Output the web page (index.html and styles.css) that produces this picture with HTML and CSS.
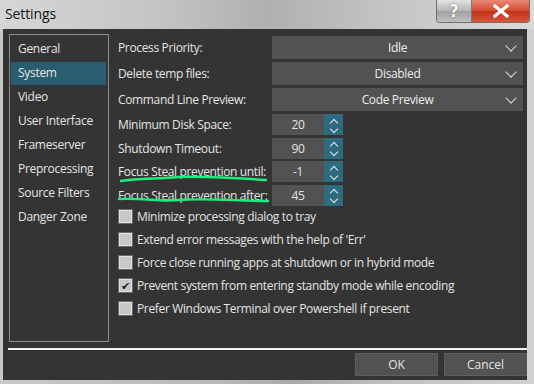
FILE: index.html
```html
<!DOCTYPE html>
<html lang="en">
<head>
    <meta charset="UTF-8">
    <title>Settings</title>
    <link rel="stylesheet" href="styles.css">
</head>
<body>
    <div class="window">
        <!-- title bar -->
        <div class="titlebar">
            <span class="title">Settings</span>
            <div class="caption-buttons">
                <div class="cap-btn help">?</div>
                <div class="cap-btn close">
                    <svg width="18" height="14" viewBox="0 0 18 14">
                        <path d="M3 2 L15 12 M15 2 L3 12" stroke="#fff" stroke-width="3.2" stroke-linecap="square"/>
                    </svg>
                </div>
            </div>
        </div>

        <div class="client">
            <div class="main">
                <!-- category list -->
                <ul class="sidebar">
                    <li>General</li>
                    <li class="active">System</li>
                    <li>Video</li>
                    <li>User Interface</li>
                    <li>Frameserver</li>
                    <li>Preprocessing</li>
                    <li>Source Filters</li>
                    <li>Danger Zone</li>
                </ul>

                <div class="panel">
                    <div class="row combo-row">
                        <span class="label">Process Priority:</span>
                        <div class="combo"><span>Idle</span><i class="chev"></i></div>
                    </div>
                    <div class="row combo-row">
                        <span class="label">Delete temp files:</span>
                        <div class="combo"><span>Disabled</span><i class="chev"></i></div>
                    </div>
                    <div class="row combo-row">
                        <span class="label">Command Line Preview:</span>
                        <div class="combo"><span>Code Preview</span><i class="chev"></i></div>
                    </div>

                    <div class="row spin-row">
                        <span class="label">Minimum Disk Space:</span>
                        <div class="spin"><span class="value">20</span><span class="arrows"><i class="up"></i><i class="down"></i></span></div>
                    </div>
                    <div class="row spin-row">
                        <span class="label">Shutdown Timeout:</span>
                        <div class="spin"><span class="value">90</span><span class="arrows"><i class="up"></i><i class="down"></i></span></div>
                    </div>
                    <div class="row spin-row">
                        <span class="label">Focus Steal prevention until:</span>
                        <div class="spin"><span class="value">-1</span><span class="arrows"><i class="up"></i><i class="down"></i></span></div>
                    </div>
                    <div class="row spin-row">
                        <span class="label">Focus Steal prevention after:</span>
                        <div class="spin"><span class="value">45</span><span class="arrows"><i class="up"></i><i class="down"></i></span></div>
                    </div>

                    <div class="checks">
                        <label class="check"><span class="box"></span>Minimize processing dialog to tray</label>
                        <label class="check"><span class="box"></span>Extend error messages with the help of 'Err'</label>
                        <label class="check"><span class="box"></span>Force close running apps at shutdown or in hybrid mode</label>
                        <label class="check"><span class="box checked">&#10004;</span>Prevent system from entering standby mode while encoding</label>
                        <label class="check"><span class="box"></span>Prefer Windows Terminal over Powershell if present</label>
                    </div>

                    <!-- hand drawn green marks -->
                    <svg class="marks" width="160" height="40" viewBox="0 0 160 40">
                        <path d="M3 9 C 20 6, 40 7, 60 5 C 90 4, 120 6, 148 8" stroke="#19f07c" stroke-width="2.4" fill="none" stroke-linecap="round"/>
                        <path d="M1 27 C 25 26, 45 30, 60 28 C 90 26, 120 29, 150 29" stroke="#19f07c" stroke-width="2.4" fill="none" stroke-linecap="round"/>
                    </svg>
                </div>
            </div>

            <div class="footer">
                <button>OK</button>
                <button>Cancel</button>
            </div>
        </div>
    </div>
</body>
</html>
```

FILE: styles.css
```css
body {
    margin: 0;
    padding: 0;
    background-color: #d9d9d9;
    font-family: "Open Sans", "Noto Sans", sans-serif;
}

.window {
    width: 534px;
    height: 384px;
    background: linear-gradient(90deg, #c9c9c9 0%, #b8b8b8 40%, #a9a9a9 55%, #c2c2c2 75%, #d0d0d0 100%);
    box-sizing: border-box;
    display: flex;
    flex-direction: column;
}

/* title bar */
.titlebar {
    height: 29px;
    display: flex;
    justify-content: space-between;
    align-items: flex-start;
    background: linear-gradient(90deg, #d6d6d6 0%, #c4c4c4 30%, #b0b0b0 50%, #c6c6c6 75%, #dadada 100%);
}

.title {
    font-size: 14px;
    color: #111;
    padding: 4px 0 0 5px;
    letter-spacing: -0.1px;
}

.caption-buttons {
    display: flex;
    margin-right: 4px;
    border: 1px solid #6f6f6f;
    border-top: none;
    border-radius: 0 0 4px 4px;
    overflow: hidden;
}

.cap-btn {
    height: 22px;
    display: flex;
    align-items: center;
    justify-content: center;
}

.help {
    width: 34px;
    background: linear-gradient(#e4e4e4, #b4b4b4 50%, #a0a0a0 51%, #c0c0c0);
    color: #fff;
    font: bold 17px "DejaVu Sans", sans-serif;
    text-shadow: 0 0 1px #555, 0 0 1px #555;
    border-right: 1px solid #7a7a7a;
}

.close {
    width: 57px;
    background: linear-gradient(#e88a76, #d3492f 50%, #c1311a 51%, #d7563b);
}

/* client area */
.client {
    flex: 1;
    margin: 0 7px 4px 3px;
    background-color: #343434;
    display: flex;
    flex-direction: column;
}

.main {
    display: flex;
    padding: 5px 0 0 6px;
}

.sidebar {
    list-style: none;
    margin: 0;
    padding: 3px 0 0 0;
    width: 100px;
    height: 308px;
    box-sizing: border-box;
    border: 1px solid #8c8c8c;
    font-size: 12px;
    letter-spacing: -0.3px;
    color: #e4e4e4;
}

.sidebar li {
    height: 23px;
    line-height: 22px;
    padding-left: 7px;
    margin-bottom: 1px;
    margin-right: 2px;
    margin-left: 1px;
}

.sidebar li.active {
    background-color: #2b5d71;
}

.panel {
    flex: 1;
    position: relative;
    padding: 2px 0 0 9px;
    color: #e4e4e4;
    font-size: 12px;
    letter-spacing: -0.35px;
}

.row {
    display: flex;
    align-items: center;
}

.label {
    width: 154px;
    flex-shrink: 0;
    white-space: nowrap;
}

.combo-row {
    height: 23px;
    margin-bottom: 3px;
}

.combo {
    flex: 1;
    height: 23px;
    background-color: #525252;
    display: flex;
    align-items: center;
    justify-content: center;
    position: relative;
    margin-right: 4px;
    color: #ececec;
}

.chev {
    position: absolute;
    right: 8px;
    top: 6px;
    width: 7px;
    height: 7px;
    border-right: 1px solid #dcdcdc;
    border-bottom: 1px solid #dcdcdc;
    transform: rotate(45deg);
}

.spin-row {
    height: 21px;
    margin-bottom: 2.5px;
}

.spin {
    display: flex;
    width: 71px;
    height: 21px;
    background-color: #525252;
}

.spin .value {
    flex: 1;
    text-align: center;
    line-height: 21px;
}

.arrows {
    width: 19px;
    background-color: #2c6b80;
    display: flex;
    flex-direction: column;
    align-items: center;
    justify-content: center;
    gap: 3px;
}

.arrows i {
    width: 5px;
    height: 5px;
    border-left: 1px solid #e8e8e8;
    border-top: 1px solid #e8e8e8;
}

.arrows .up {
    transform: rotate(45deg);
    margin-top: 2px;
}

.arrows .down {
    transform: rotate(225deg);
    margin-top: -3px;
}

.checks {
    margin-top: -3px;
}

.check {
    display: flex;
    align-items: center;
    height: 23px;
    font-size: 12px;
}

.box {
    width: 13px;
    height: 13px;
    background-color: #c8c8c8;
    border: 1px solid #6a6a6a;
    box-shadow: inset 0 0 0 1px #e0e0e0;
    margin-right: 4px;
    font-size: 11px;
    line-height: 13px;
    text-align: center;
    color: #222;
    letter-spacing: 0;
}

.marks {
    position: absolute;
    left: 9px;
    top: 138px;
    pointer-events: none;
}

/* buttons row */
.footer {
    margin: auto 0 0 5px;
    border-top: 2px solid #f2f2f2;
    display: flex;
    justify-content: flex-end;
    gap: 6px;
    padding: 3px 0 4px 0;
}

.footer button {
    width: 83px;
    height: 23px;
    background-color: #525252;
    border: 1px solid #5e5e5e;
    color: #e4e4e4;
    font-family: "Open Sans", "Noto Sans", sans-serif;
    font-size: 12px;
    padding: 0;
}
```
